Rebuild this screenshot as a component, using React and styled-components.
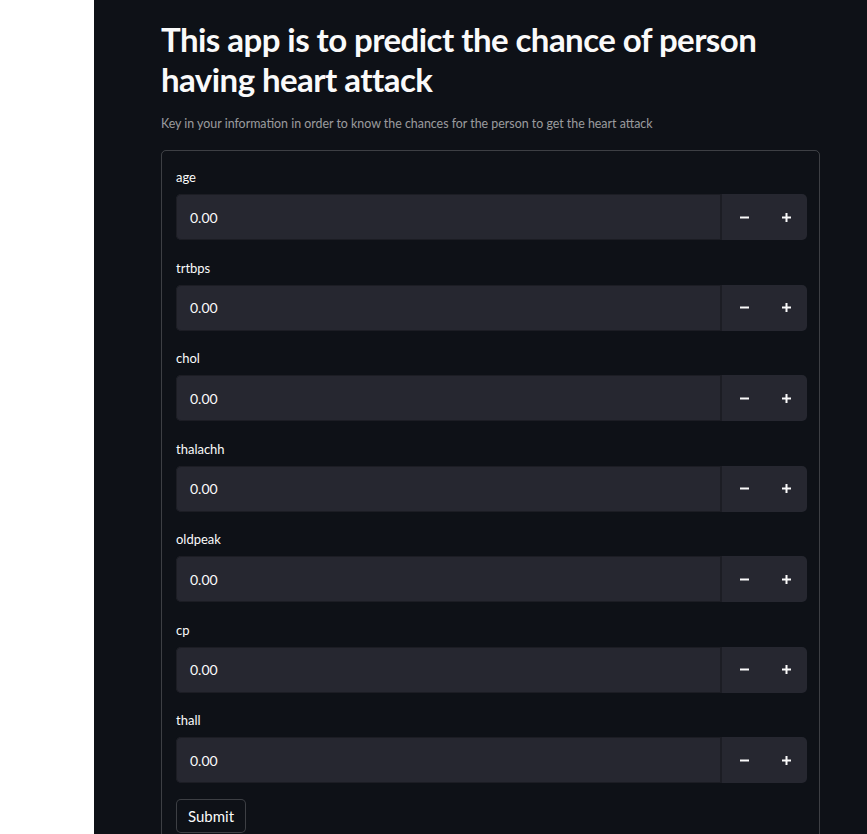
import React from "react";
import styled, { createGlobalStyle } from "styled-components";

const GlobalStyle = createGlobalStyle`
  html, body {
    margin: 0;
    padding: 0;
    background: #ffffff;
  }
  * {
    box-sizing: border-box;
  }
`;

const FIELDS = ["age", "trtbps", "chol", "thalachh", "oldpeak", "cp", "thall"];

function MinusIcon() {
  return (
    <svg width="9" height="9" viewBox="0 0 9 9">
      <rect x="0" y="3.5" width="9" height="2" fill="#fafafa" />
    </svg>
  );
}

function PlusIcon() {
  return (
    <svg width="9" height="9" viewBox="0 0 9 9">
      <rect x="0" y="3.5" width="9" height="2" fill="#fafafa" />
      <rect x="3.5" y="0" width="2" height="9" fill="#fafafa" />
    </svg>
  );
}

function NumberField({ label }) {
  return (
    <Field>
      <Label>{label}</Label>
      <InputRow>
        <ValueBox>0.00</ValueBox>
        <StepGroup>
          <StepButton>
            <MinusIcon />
          </StepButton>
          <StepButton>
            <PlusIcon />
          </StepButton>
        </StepGroup>
      </InputRow>
    </Field>
  );
}

export default function App() {
  return (
    <>
      <GlobalStyle />
      <Page>
        <SideStrip />
        <Main>
          <Title>This app is to predict the chance of person having heart attack</Title>
          <Caption>Key in your information in order to know the chances for the person to get the heart attack</Caption>
          <Form>
            {FIELDS.map((f) => (
              <NumberField key={f} label={f} />
            ))}
            <SubmitBtn>Submit</SubmitBtn>
          </Form>
        </Main>
      </Page>
    </>
  );
}

const Page = styled.div`
  display: flex;
  height: 834px;
  overflow: hidden;
  font-family: Lato, "Liberation Sans", sans-serif;
`;

const SideStrip = styled.div`
  width: 94px;
  flex-shrink: 0;
  background: #ffffff;
`;

const Main = styled.div`
  flex: 1;
  background: #0e1117;
  padding: 19px 47px 0 67px;
  color: #fafafa;
`;

const Title = styled.h1`
  margin: 0;
  font-size: 33px;
  font-weight: 700;
  line-height: 40px;
  letter-spacing: -0.55px;
  color: #fafafa;
`;

const Caption = styled.p`
  margin: 15px 0 0;
  font-size: 12.4px;
  line-height: 20px;
  color: rgba(250, 250, 250, 0.6);
`;

const Form = styled.div`
  margin-top: 16px;
  border: 1px solid rgba(250, 250, 250, 0.2);
  border-radius: 5px;
  padding: 16px 12px 16px 14px;
  display: flex;
  flex-direction: column;
  gap: 17.5px;
`;

const Field = styled.div`
  display: flex;
  flex-direction: column;
  gap: 7px;
`;

const Label = styled.div`
  height: 20px;
  line-height: 20px;
  font-size: 13px;
  color: #fafafa;
`;

const InputRow = styled.div`
  display: flex;
  height: 46px;
  background: #262730;
  border-radius: 5px;
  overflow: hidden;
`;

const ValueBox = styled.div`
  flex: 1;
  display: flex;
  align-items: center;
  padding-left: 13px;
  font-size: 14px;
  color: #fafafa;
  border: 1px solid #1c1d24;
  border-right-width: 2px;
  border-radius: 5px 0 0 5px;
`;

const StepGroup = styled.div`
  display: flex;
  width: 85px;
  padding-left: 2px;
`;

const StepButton = styled.div`
  flex: 1;
  display: flex;
  align-items: center;
  justify-content: center;
`;

const SubmitBtn = styled.button`
  align-self: flex-start;
  margin-top: -1.5px;
  height: 34px;
  padding: 0 11px;
  font-family: inherit;
  font-size: 15px;
  color: #fafafa;
  background: #0e1117;
  border: 1px solid rgba(250, 250, 250, 0.2);
  border-radius: 5px;
`;
